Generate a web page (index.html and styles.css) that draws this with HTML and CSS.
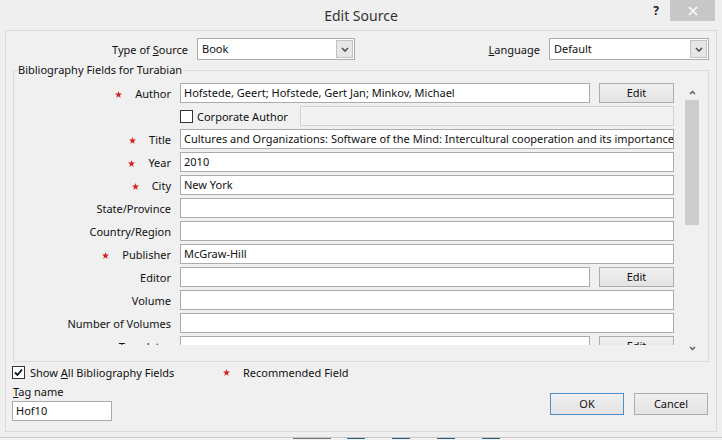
FILE: index.html
```html
<!DOCTYPE html>
<html>
<head>
<meta charset="utf-8">
<title>Edit Source</title>
<link rel="stylesheet" href="styles.css">
</head>
<body>
<div class="window">
  <div class="titlebar">
    <div></div>
    <div class="title">Edit Source</div>
    <div class="controls">
      <span class="help">?</span>
      <span class="close"><svg width="10" height="10" viewBox="0 0 10 10"><path d="M1 1L9 9M9 1L1 9" stroke="#fff" stroke-width="1.6"/></svg></span>
    </div>
  </div>
  <div class="panel">
    <div class="toprow">
      <div class="lbl-type">Type of <u>S</u>ource</div>
      <div class="select sel-type"><span class="val">Book</span><span class="drop"><svg width="8" height="5" viewBox="0 0 8 5"><path d="M1 1L4 4L7 1" fill="none" stroke="#505050" stroke-width="1.6"/></svg></span></div>
      <div class="spacer"></div>
      <div class="lbl-lang"><u>L</u>anguage</div>
      <div class="select sel-lang"><span class="val">Default</span><span class="drop"><svg width="8" height="5" viewBox="0 0 8 5"><path d="M1 1L4 4L7 1" fill="none" stroke="#505050" stroke-width="1.6"/></svg></span></div>
    </div>
    <fieldset class="group">
      <legend>Bibliography Fields for Turabian</legend>
      <div class="groupbody">
        <div class="scrollcol">
          <div class="viewport">
            <div class="row">
              <div class="lbl"><svg class="star" width="7" height="7" viewBox="0 0 10 10"><polygon points="5,0 6.2,3.6 10,3.6 7,5.9 8.1,9.6 5,7.4 1.9,9.6 3,5.9 0,3.6 3.8,3.6" fill="#d21f1f"/></svg>Author</div>
              <div class="input short">Hofstede, Geert; Hofstede, Gert Jan; Minkov, Michael</div>
              <div class="btn edit">Edit</div>
            </div>
            <div class="row">
              <div class="lbl"></div>
              <div class="corp"><span class="cb"></span><span>Corporate Author</span></div>
              <div class="input disabled"></div>
            </div>
            <div class="row">
              <div class="lbl"><svg class="star" width="7" height="7" viewBox="0 0 10 10"><polygon points="5,0 6.2,3.6 10,3.6 7,5.9 8.1,9.6 5,7.4 1.9,9.6 3,5.9 0,3.6 3.8,3.6" fill="#d21f1f"/></svg>Title</div>
              <div class="input full">Cultures and Organizations: Software of the Mind: Intercultural cooperation and its importance for survival</div>
            </div>
            <div class="row">
              <div class="lbl"><svg class="star" width="7" height="7" viewBox="0 0 10 10"><polygon points="5,0 6.2,3.6 10,3.6 7,5.9 8.1,9.6 5,7.4 1.9,9.6 3,5.9 0,3.6 3.8,3.6" fill="#d21f1f"/></svg>Year</div>
              <div class="input full">2010</div>
            </div>
            <div class="row">
              <div class="lbl"><svg class="star" width="7" height="7" viewBox="0 0 10 10"><polygon points="5,0 6.2,3.6 10,3.6 7,5.9 8.1,9.6 5,7.4 1.9,9.6 3,5.9 0,3.6 3.8,3.6" fill="#d21f1f"/></svg>City</div>
              <div class="input full">New York</div>
            </div>
            <div class="row">
              <div class="lbl">State/Province</div>
              <div class="input full"></div>
            </div>
            <div class="row">
              <div class="lbl">Country/Region</div>
              <div class="input full"></div>
            </div>
            <div class="row">
              <div class="lbl"><svg class="star" width="7" height="7" viewBox="0 0 10 10"><polygon points="5,0 6.2,3.6 10,3.6 7,5.9 8.1,9.6 5,7.4 1.9,9.6 3,5.9 0,3.6 3.8,3.6" fill="#d21f1f"/></svg>Publisher</div>
              <div class="input full">McGraw-Hill</div>
            </div>
            <div class="row">
              <div class="lbl">Editor</div>
              <div class="input short"></div>
              <div class="btn edit">Edit</div>
            </div>
            <div class="row">
              <div class="lbl">Volume</div>
              <div class="input full"></div>
            </div>
            <div class="row">
              <div class="lbl">Number of Volumes</div>
              <div class="input full"></div>
            </div>
            <div class="row">
              <div class="lbl">Translator</div>
              <div class="input short"></div>
              <div class="btn edit">Edit</div>
            </div>
            <div class="row">
              <div class="lbl">Short Title</div>
              <div class="input full"></div>
            </div>
          </div>
        </div>
        <div class="scrollbar">
          <div class="sb-arrow"><svg width="7" height="5" viewBox="0 0 7 5"><path d="M1 4L3.5 1.5L6 4" fill="none" stroke="#606060" stroke-width="1.5"/></svg></div>
          <div class="sb-track"><div class="sb-thumb"></div></div>
          <div class="sb-arrow"><svg width="7" height="5" viewBox="0 0 7 5"><path d="M1 1L3.5 3.5L6 1" fill="none" stroke="#606060" stroke-width="1.5"/></svg></div>
        </div>
      </div>
    </fieldset>
    <div class="bottom">
      <div class="bleft">
        <div class="brow">
          <div class="showall"><span class="cb checked"><svg width="11" height="11" viewBox="0 0 11 11"><path d="M2 5.5L4.5 8L9 2.5" fill="none" stroke="#111" stroke-width="1.8"/></svg></span><span>Show <u>A</u>ll Bibliography Fields</span></div>
          <svg class="star" width="7" height="7" viewBox="0 0 10 10"><polygon points="5,0 6.2,3.6 10,3.6 7,5.9 8.1,9.6 5,7.4 1.9,9.6 3,5.9 0,3.6 3.8,3.6" fill="#d21f1f"/></svg>
          <span class="rec">Recommended Field</span>
        </div>
        <div class="taglbl"><u>T</u>ag name</div>
        <div class="input tag">Hof10</div>
      </div>
      <div class="buttons">
        <div class="btn dlg ok">OK</div>
        <div class="btn dlg">Cancel</div>
      </div>
    </div>
  </div>
</div>
<div class="behind">
  <span class="bk dash"></span>
  <span class="bk blue b1"></span>
  <span class="bk blue"></span>
  <span class="bk blue"></span>
  <span class="bk blue"></span>
</div>
</body>
</html>
```

FILE: styles.css
```css
* { box-sizing: border-box; }
html, body { margin: 0; padding: 0; }
body {
  width: 722px;
  height: 440px;
  overflow: hidden;
  background: #efefef;
  font-family: "Noto Sans", "Open Sans", sans-serif;
  font-size: 11px;
  color: #111;
}
u { text-decoration: underline; text-underline-offset: 1px; }

.window {
  height: 438px;
  background: #efefef;
  border-bottom: 1px solid #c6c6c6;
}

.titlebar {
  height: 30px;
  display: grid;
  grid-template-columns: 1fr auto 1fr;
}
.title {
  font-size: 14px;
  line-height: 32px;
  color: #333;
}
.controls {
  display: flex;
  justify-content: flex-end;
  align-items: flex-start;
  padding-right: 7px;
}
.help {
  font-weight: bold;
  font-size: 12px;
  line-height: 14px;
  margin-top: 4px;
  margin-right: 11px;
  color: #222;
}
.close {
  width: 45px;
  height: 21px;
  background: #c7c7c7;
  display: flex;
  align-items: center;
  justify-content: center;
}

.panel {
  margin: 0 5px;
  height: 402px;
  border: 1px solid #dadada;
  background: #f0f0f0;
}

.toprow {
  display: flex;
  align-items: center;
  padding: 7px 7px 0 0;
}
.lbl-type { width: 182px; text-align: right; margin-right: 9px; }
.lbl-lang { margin-right: 9px; }
.spacer { flex: 1; }
.select {
  height: 22px;
  border: 1px solid #ababab;
  background: #fff;
  display: flex;
  align-items: stretch;
}
.sel-type { width: 158px; }
.sel-lang { width: 160px; }
.select .val { flex: 1; padding-left: 4px; line-height: 20px; }
.select .drop {
  width: 17px;
  margin: 1px;
  background: #e6e6e6;
  border: 1px solid #c2c2c2;
  display: flex;
  align-items: center;
  justify-content: center;
}

.group {
  margin: 2px 7px 0 7px;
  padding: 0;
  border: 1px solid #dcdcdc;
  min-width: 0;
}
.group legend {
  margin-left: 3px;
  padding: 0 1px;
  line-height: 16px;
}
.groupbody {
  display: flex;
  height: 283px;
}
.scrollcol { flex: 1; }
.viewport {
  height: 267px;
  overflow: hidden;
  padding: 5px 10px 0 0;
}
.row {
  display: flex;
  align-items: center;
  height: 20px;
  margin-bottom: 3px;
}
.lbl {
  width: 157px;
  margin-right: 9px;
  text-align: right;
  white-space: nowrap;
}
.star { margin-right: 13px; vertical-align: 0; }
.input {
  height: 20px;
  border: 1px solid #ababab;
  background: #fff;
  padding: 0 3px;
  line-height: 18px;
  white-space: nowrap;
  overflow: hidden;
}
.input.full { width: 494px; }
.input.short { width: 410px; margin-right: 9px; }
.input.disabled { width: 374px; background: #f2f2f2; border-color: #d3d3d3; }
.btn {
  height: 20px;
  border: 1px solid #adadad;
  background: linear-gradient(#f0f0f0, #e3e3e3);
  text-align: center;
  line-height: 18px;
}
.btn.edit { width: 75px; }
.corp {
  width: 120px;
  display: flex;
  align-items: center;
}
.cb {
  width: 13px;
  height: 13px;
  border: 1px solid #333;
  background: #fff;
  margin-right: 4px;
  display: inline-flex;
  align-items: center;
  justify-content: center;
}

.scrollbar {
  width: 17px;
  margin: 6px 8px 5px 0;
  display: flex;
  flex-direction: column;
}
.sb-arrow {
  height: 16px;
  display: flex;
  align-items: center;
  justify-content: center;
}
.sb-track { flex: 1; padding: 0 1px; }
.sb-thumb { height: 125px; background: #cdcdcd; }

.bottom {
  display: flex;
  padding: 3px 8px 0 6px;
}
.bleft { flex: 1; }
.brow {
  display: flex;
  align-items: center;
  height: 14px;
}
.showall {
  width: 211px;
  display: flex;
  align-items: center;
}
.showall .cb { margin-right: 5px; }
.brow .star { margin-right: 13px; }
.taglbl { margin-top: 5px; line-height: 15px; padding-left: 1px; }
.input.tag { width: 100px; margin-top: 2px; }
.buttons {
  display: flex;
  margin-top: 28px;
}
.btn.dlg { width: 74px; height: 22px; line-height: 20px; margin-left: 10px; }
.btn.ok { border-color: #4c8fd0; }

.behind {
  height: 1px;
  display: flex;
  background: #fafafa;
  padding-left: 293px;
}
.bk { display: block; height: 1px; }
.dash { width: 38px; background: #777; margin-right: 16px; }
.blue { width: 18px; background: #2d5d80; margin-right: 27px; }
```
